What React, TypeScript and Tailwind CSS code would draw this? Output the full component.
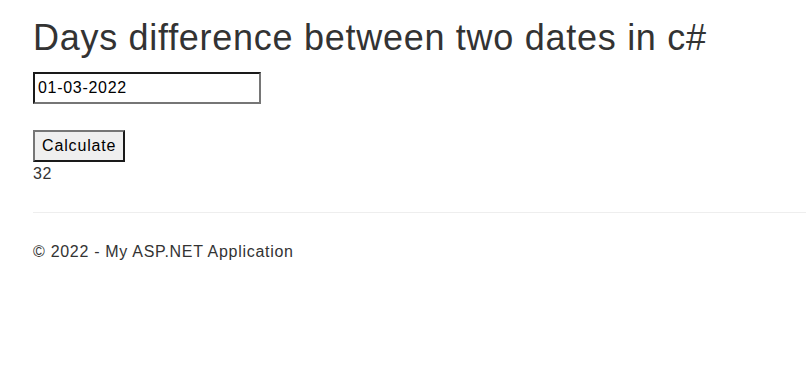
import React from "react";

export default function App() {
  return (
    <div className="min-h-screen bg-white font-['Liberation_Sans',Arial,sans-serif] text-[#333] overflow-hidden">
      <div className="pl-[33px] pt-[18px]">
        <h1 className="text-[36px] leading-[1.1] font-normal tracking-[0.72px] mb-[14px] whitespace-nowrap">
          Days difference between two dates in c#
        </h1>
        <input
          type="text"
          defaultValue="01-03-2022"
          className="block w-[228px] h-[32px] px-[3px] text-[16px] tracking-[0.7px] text-black border-2 border-t-[#1a1a1a] border-l-[#1a1a1a] border-b-[#767676] border-r-[#767676] outline-none"
        />
        <div className="h-[26px]" />
        <button className="block h-[32px] px-[7px] text-[16px] tracking-[0.85px] text-black bg-[#efefef] border-2 border-t-[#767676] border-l-[#767676] border-b-[#1a1a1a] border-r-[#1a1a1a]">
          Calculate
        </button>
        <div className="text-[16px] leading-[20px] tracking-[0.7px] mt-[2px]">32</div>
        <hr className="mt-[28px] mb-[28px] border-t border-[#eee]" />
        <footer className="text-[16px] leading-[22px] tracking-[0.7px]">
          <p>© 2022 - My ASP.NET Application</p>
        </footer>
      </div>
    </div>
  );
}
